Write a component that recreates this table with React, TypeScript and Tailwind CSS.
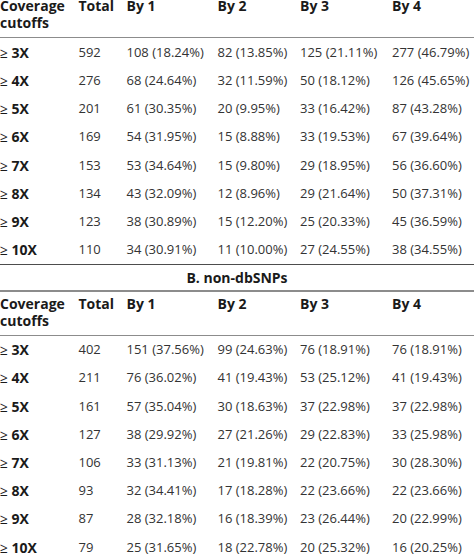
import React from 'react';

type Row = { cut: string; total: string; vals: string[] };

const dbSnps: Row[] = [
  { cut: '3X', total: '592', vals: ['108 (18.24%)', '82 (13.85%)', '125 (21.11%)', '277 (46.79%)'] },
  { cut: '4X', total: '276', vals: ['68 (24.64%)', '32 (11.59%)', '50 (18.12%)', '126 (45.65%)'] },
  { cut: '5X', total: '201', vals: ['61 (30.35%)', '20 (9.95%)', '33 (16.42%)', '87 (43.28%)'] },
  { cut: '6X', total: '169', vals: ['54 (31.95%)', '15 (8.88%)', '33 (19.53%)', '67 (39.64%)'] },
  { cut: '7X', total: '153', vals: ['53 (34.64%)', '15 (9.80%)', '29 (18.95%)', '56 (36.60%)'] },
  { cut: '8X', total: '134', vals: ['43 (32.09%)', '12 (8.96%)', '29 (21.64%)', '50 (37.31%)'] },
  { cut: '9X', total: '123', vals: ['38 (30.89%)', '15 (12.20%)', '25 (20.33%)', '45 (36.59%)'] },
  { cut: '10X', total: '110', vals: ['34 (30.91%)', '11 (10.00%)', '27 (24.55%)', '38 (34.55%)'] },
];

const nonDbSnps: Row[] = [
  { cut: '3X', total: '402', vals: ['151 (37.56%)', '99 (24.63%)', '76 (18.91%)', '76 (18.91%)'] },
  { cut: '4X', total: '211', vals: ['76 (36.02%)', '41 (19.43%)', '53 (25.12%)', '41 (19.43%)'] },
  { cut: '5X', total: '161', vals: ['57 (35.04%)', '30 (18.63%)', '37 (22.98%)', '37 (22.98%)'] },
  { cut: '6X', total: '127', vals: ['38 (29.92%)', '27 (21.26%)', '29 (22.83%)', '33 (25.98%)'] },
  { cut: '7X', total: '106', vals: ['33 (31.13%)', '21 (19.81%)', '22 (20.75%)', '30 (28.30%)'] },
  { cut: '8X', total: '93', vals: ['32 (34.41%)', '17 (18.28%)', '22 (23.66%)', '22 (23.66%)'] },
  { cut: '9X', total: '87', vals: ['28 (32.18%)', '16 (18.39%)', '23 (26.44%)', '20 (22.99%)'] },
  { cut: '10X', total: '79', vals: ['25 (31.65%)', '18 (22.78%)', '20 (25.32%)', '16 (20.25%)'] },
];

const cols = 'grid grid-cols-[78.5px_48px_91px_82.5px_92px_1fr]';

const HeaderRow = () => (
  <div className={`${cols} pt-[3px] pb-[6px] border-b border-[#8c8c8c] text-[14px] leading-[17px] font-bold text-[#1a1a1a]`}>
    <div>
      Coverage
      <br />
      cutoffs
    </div>
    <div>Total</div>
    <div>By 1</div>
    <div>By 2</div>
    <div>By 3</div>
    <div>By 4</div>
  </div>
);

const DataRows = ({ rows }: { rows: Row[] }) => (
  <div>
    {rows.map((r) => (
      <div key={r.cut} className={`${cols} h-[28.2px] items-center text-[13px] text-[#333]`}>
        <div className="text-[#1a1a1a]">
          <span className="text-[14px]">≥</span>{' '}
          <span className="text-[14px] font-bold">{r.cut}</span>
        </div>
        <div>{r.total}</div>
        {r.vals.map((v, i) => (
          <div key={i}>{v}</div>
        ))}
      </div>
    ))}
  </div>
);

export default function App() {
  return (
    <div className="w-[474px] h-[557px] overflow-hidden bg-white" style={{ fontFamily: '"Open Sans", "Noto Sans", sans-serif' }}>
      <div className="mt-[-5.6px] whitespace-nowrap">
        <HeaderRow />
        <DataRows rows={dbSnps} />
        <div className="border-t-[1.5px] border-[#4d4d4d] h-[26px] flex items-center justify-center text-[14px] font-bold text-[#1a1a1a]">
          B. non-dbSNPs
        </div>
        <div className="border-t-2 border-[#8c8c8c]">
          <HeaderRow />
          <DataRows rows={nonDbSnps} />
        </div>
      </div>
    </div>
  );
}
